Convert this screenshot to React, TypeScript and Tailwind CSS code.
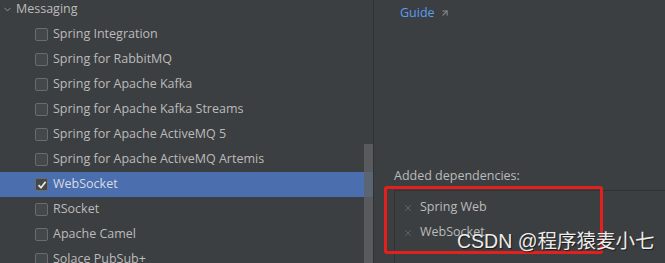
import { ChevronDown, ArrowUpRight, X } from "lucide-react";

const items = [
  "Spring Integration",
  "Spring for RabbitMQ",
  "Spring for Apache Kafka",
  "Spring for Apache Kafka Streams",
  "Spring for Apache ActiveMQ 5",
  "Spring for Apache ActiveMQ Artemis",
  "WebSocket",
  "RSocket",
  "Apache Camel",
  "Solace PubSub+",
];

function Checkbox({ checked }: { checked: boolean }) {
  return (
    <div className="w-[13px] h-[13px] rounded-[2px] border border-[#6b6b6b] bg-[#43494a] flex items-center justify-center shrink-0">
      {checked && (
        <svg width="10" height="10" viewBox="0 0 10 10">
          <path d="M1.5 5.2 L4 7.7 L8.6 1.8" stroke="#e6e6e6" strokeWidth="1.8" fill="none" />
        </svg>
      )}
    </div>
  );
}

export default function App() {
  return (
    <div className="w-[665px] h-[263px] flex bg-[#3c3f41] text-[#bbbbbb] text-[12.5px] overflow-hidden font-['Open_Sans',sans-serif]">
      {/* Left: dependency tree */}
      <div className="w-[373px] shrink-0 flex relative overflow-hidden">
        <div className="flex-1 flex flex-col -mt-[3px]">
          <div className="h-[25px] shrink-0 flex items-center pl-[2px] gap-[3px]">
            <ChevronDown className="w-[11px] h-[11px] text-[#aaaaaa]" strokeWidth={1.6} />
            <span>Messaging</span>
          </div>
          {items.map((name) => {
            const sel = name === "WebSocket";
            return (
              <div
                key={name}
                className={`h-[25px] flex items-center pl-[35px] gap-[5px] shrink-0 whitespace-nowrap ${sel ? "bg-[#4b6eaf] text-[#d8dbe0]" : ""}`}
              >
                <Checkbox checked={sel} />
                <span>{name}</span>
              </div>
            );
          })}
        </div>
        {/* scrollbar thumb */}
        <div className="absolute right-0 top-[144px] bottom-0 w-[9px] bg-[#5f6264]/80" />
      </div>
      <div className="w-px bg-[#323232] shrink-0" />

      {/* Right: details */}
      <div className="flex-1 flex flex-col relative">
        <div className="flex items-center gap-[5px] pl-[26px] pt-[6px] h-[20px] shrink-0">
          <span className="text-[#589df6]">Guide</span>
          <ArrowUpRight className="w-[10px] h-[10px] text-[#8a8a8a]" strokeWidth={2.6} />
        </div>
        <div className="mt-[146px] pl-[20px] h-[20px] flex items-center shrink-0">Added dependencies:</div>
        <div className="mt-[4px] ml-[20px] flex-1 border-l border-t border-[#323232] flex flex-col pt-[4px]">
          {["Spring Web", "WebSocket"].map((d) => (
            <div key={d} className="h-[25px] shrink-0 flex items-center pl-[8px] gap-[7px]">
              <X className="w-[10px] h-[10px] text-[#777777]" strokeWidth={1.6} />
              <span>{d}</span>
            </div>
          ))}
        </div>

        {/* red highlight */}
        <div className="absolute left-[10px] top-[186px] w-[219px] h-[68px] border-[3px] border-[#e3201b] rounded-[3px]" />
        {/* watermark */}
        <div
          className="absolute left-[83px] top-[229px] text-[19.5px] leading-[24px] text-[#ececec] whitespace-nowrap font-['Liberation_Sans','Noto_Sans_CJK_SC',sans-serif]"
          style={{ textShadow: "1px 1px 1px #1a1a1a" }}
        >
          CSDN @程序猿麦小七
        </div>
      </div>
    </div>
  );
}
